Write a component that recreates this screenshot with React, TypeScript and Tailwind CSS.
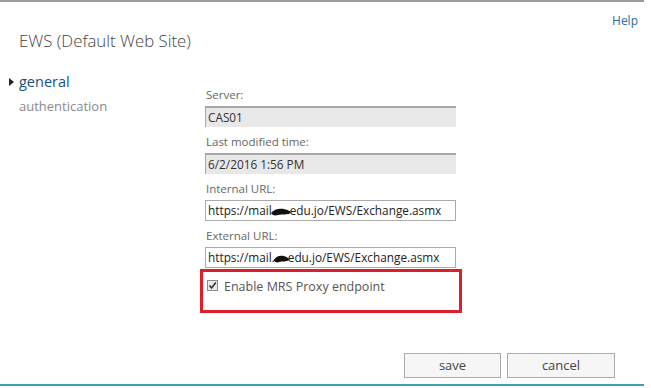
const font = { fontFamily: '"Open Sans", "Noto Sans", sans-serif' }

function Blob({ w = 22 }: { w?: number }) {
  return (
    <svg width={w} height="10" viewBox="0 0 22 10" preserveAspectRatio="none" className="inline-block align-middle -mx-[2px]">
      <path d="M1 6 C4 2, 9 1, 14 2 C18 3, 21 4, 21 6 C18 8, 12 7, 8 8 C5 9, 2 8, 1 6 Z" fill="#111" />
    </svg>
  )
}

function Field({ label, children, readOnly }: { label: string; children: React.ReactNode; readOnly?: boolean }) {
  return (
    <div className="flex flex-col">
      <div className="pt-[2px] text-[11.5px] leading-[16px] text-[#666] pl-[1px]">{label}</div>
      <div
        className={
          readOnly
            ? 'mt-[3px] h-[21px] w-[251px] bg-[#e8e8e8] border-t-2 border-l border-[#a8a8a8] pl-[2px] text-[11.8px] leading-[19px] text-[#333]'
            : 'mt-[3px] h-[21px] w-[251px] bg-white border border-[#ababab] pl-[2px] text-[11.8px] leading-[19px] text-[#222] whitespace-nowrap overflow-hidden'
        }
      >
        {children}
      </div>
    </div>
  )
}

export default function App() {
  return (
    <div className="w-[651px] h-[388px] bg-white relative overflow-hidden" style={font}>
      <div className="h-[2px] w-[644px] bg-[#9a9a9a]" />
      <div className="flex justify-end pr-[13px] pt-[10px]">
        <span className="text-[12px] text-[#2b6c9a]">Help</span>
      </div>
      <h1 className="pl-[19px] -mt-[1px] text-[16.8px] font-light text-[#444] leading-[24px]">EWS (Default Web Site)</h1>

      <div className="flex mt-[18px]">
        <div className="w-[205px] shrink-0 pt-[1px]">
          <div className="flex items-center">
            <span className="ml-[9px] w-0 h-0 border-y-[4px] border-y-transparent border-l-[5px] border-l-[#222]" />
            <span className="ml-[5px] text-[14.5px] leading-[20px] text-[#1d4f7c]">general</span>
          </div>
          <div className="pl-[19px] mt-[5px] text-[13px] leading-[18px] text-[#8a8a8a]">authentication</div>
        </div>

        <div className="pt-[14px] flex flex-col gap-[5px]">
          <Field label="Server:" readOnly>CAS01</Field>
          <Field label="Last modified time:" readOnly>6/2/2016 1:56 PM</Field>
          <Field label="Internal URL:">
            https://mail<Blob />edu.jo/EWS/Exchange.asmx
          </Field>
          <Field label="External URL:">
            https://mail.<Blob w={17} />edu.jo/EWS/Exchange.asmx
          </Field>
        </div>
      </div>

      <div className="ml-[200px] mt-[1px] w-[262px] h-[44px] border-[3px] border-[#dc1f2b] flex items-start pt-[7px] pl-[4px]">
        <div className="w-[11px] h-[11px] border border-[#8a8a8a] bg-[#e9e9e9] flex items-center justify-center mt-[1px]">
          <svg width="9" height="9" viewBox="0 0 9 9">
            <path d="M1.5 4.5 L3.6 7 L7.8 1.5" stroke="#333" strokeWidth="1.6" fill="none" />
          </svg>
        </div>
        <span className="ml-[6px] text-[12.5px] leading-[16px] text-[#555]">Enable MRS Proxy endpoint</span>
      </div>

      <div className="flex justify-end gap-[6px] pr-[36px] mt-[40px]">
        <button className="w-[97px] h-[25px] bg-[#f6f6f6] border border-[#ababab] text-[13px] text-[#444]">save</button>
        <button className="w-[108px] h-[25px] bg-[#f6f6f6] border border-[#ababab] text-[13px] text-[#444]">cancel</button>
      </div>

      <div className="absolute left-0 top-[384px] h-[2px] w-[644px] bg-[#3e9fb0]" />
    </div>
  )
}
